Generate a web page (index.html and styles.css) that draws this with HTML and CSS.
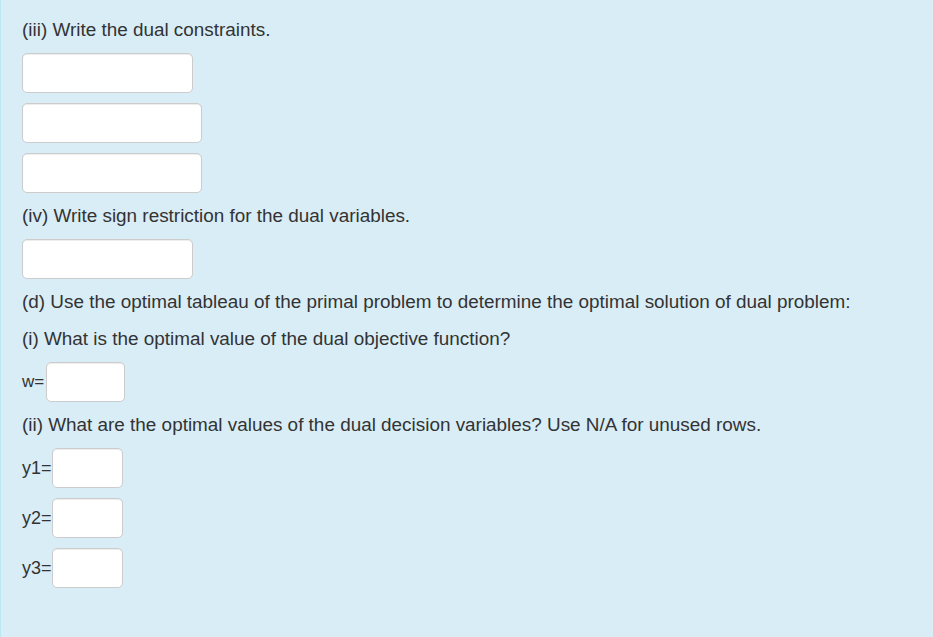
FILE: index.html
```html
<!DOCTYPE html>
<html>
<head>
<meta charset="utf-8">
<link rel="stylesheet" href="styles.css">
</head>
<body>
<div class="panel">
  <p class="q">(iii) Write the dual constraints.</p>
  <div class="group">
    <input class="box w171" type="text">
    <input class="box w180" type="text">
    <input class="box w180" type="text">
  </div>
  <p class="q">(iv) Write sign restriction for the dual variables.</p>
  <div class="group">
    <input class="box w171" type="text">
  </div>
  <p class="q tight">(d) Use the optimal tableau of the primal problem to determine the optimal solution of dual problem:</p>
  <p class="q">(i) What is the optimal value of the dual objective function?</p>
  <div class="group">
    <div class="row"><span class="lbl small">w=</span><input class="box w79" type="text"></div>
  </div>
  <p class="q">(ii) What are the optimal values of the dual decision variables? Use N/A for unused rows.</p>
  <div class="group">
    <div class="row"><span class="lbl">y1=</span><input class="box w71" type="text"></div>
    <div class="row"><span class="lbl">y2=</span><input class="box w71" type="text"></div>
    <div class="row"><span class="lbl">y3=</span><input class="box w71" type="text"></div>
  </div>
</div>
</body>
</html>
```
FILE: styles.css
```css
html, body {
  margin: 0;
  padding: 0;
  background: #d9edf7;
}
.panel {
  box-sizing: border-box;
  width: 933px;
  min-height: 637px;
  background: #d9edf7;
  border-left: 1px solid #bce8f1;
  padding: 18px 0 0 21px;
  font-family: "Liberation Sans", Arial, sans-serif;
  font-size: 18.9px;
  color: #333333;
}
.q {
  margin: 0 0 11px 0;
  line-height: 24px;
  white-space: nowrap;
}
.q.tight {
  margin-bottom: 13px;
}
.group {
  display: flex;
  flex-direction: column;
  align-items: flex-start;
  gap: 10px;
  margin-bottom: 11px;
}
.row {
  display: flex;
  align-items: center;
}
.lbl {
  line-height: 24px;
  font-size: 18px;
  width: 30px;
}
.lbl.small {
  font-size: 17px;
  width: 24px;
}
.box {
  box-sizing: border-box;
  height: 40px;
  margin: 0;
  padding: 6px 12px;
  background: #ffffff;
  border: 1px solid #cccccc;
  border-radius: 5px;
  box-shadow: inset 0 1px 1px rgba(0, 0, 0, 0.075);
  font: inherit;
}
.w171 { width: 171px; }
.w180 { width: 180px; }
.w79 { width: 79px; }
.w71 { width: 71px; }
```
